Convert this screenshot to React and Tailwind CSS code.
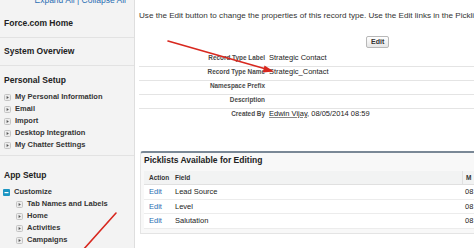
import React from 'react';

const Arrow = () => (
    <svg width="7" height="7" viewBox="0 0 7 7" className="shrink-0">
        <rect x="0.5" y="0.5" width="6" height="6" rx="1" fill="#ececec" stroke="#c4c4c4" />
        <path d="M2.6 1.9 L4.9 3.5 L2.6 5.1 Z" fill="#555" />
    </svg>
);

const Minus = () => (
    <svg width="7" height="7" viewBox="0 0 7 7" className="shrink-0">
        <rect x="0" y="0" width="7" height="7" rx="1" fill="#1b95c2" />
        <rect x="1.5" y="3" width="4" height="1.2" fill="#fff" />
    </svg>
);

const NavItem = ({ label, indent }) => (
    <div className={`flex items-center h-[12px] gap-[4px] ${indent ? 'pl-[16px]' : 'pl-[4px]'}`}>
        <Arrow />
        <span className="text-[7.5px] font-bold text-[#333]">{label}</span>
    </div>
);

const details = [
    ['Record Type Label', 'Strategic Contact'],
    ['Record Type Name', 'Strategic_Contact'],
    ['Namespace Prefix', ''],
    ['Description', ''],
];

const picklists = ['Lead Source', 'Level', 'Salutation'];

const App = () => {
    return (
        <div className="relative w-[474px] h-[248px] overflow-hidden flex bg-white" style={{ fontFamily: '"Liberation Sans", Arial, sans-serif' }}>
            {/* sidebar */}
            <div className="w-[135px] shrink-0 bg-[#f3f3f3] border-r border-[#dedede]">
                <div className="h-[10px] flex justify-end pr-[8px] overflow-hidden">
                    <span className="text-[8.5px] text-[#2a6fb3] leading-none mt-[-4px]">Expand All | Collapse All</span>
                </div>
                <div className="h-[28px] flex items-center pl-[4px] border-b border-[#e2e2e2]">
                    <span className="text-[8.5px] font-bold text-[#222]">Force.com Home</span>
                </div>
                <div className="h-[28px] flex items-center pl-[4px] border-b border-[#e2e2e2]">
                    <span className="text-[8.5px] font-bold text-[#222]">System Overview</span>
                </div>
                <div className="pt-[9px] pb-[4px] border-b border-[#e2e2e2]">
                    <div className="pl-[4px] text-[8.5px] leading-[10px] font-bold text-[#222] mb-[6px]">Personal Setup</div>
                    <NavItem label="My Personal Information" />
                    <NavItem label="Email" />
                    <NavItem label="Import" />
                    <NavItem label="Desktop Integration" />
                    <NavItem label="My Chatter Settings" />
                </div>
                <div className="pt-[14px]">
                    <div className="pl-[4px] text-[8.5px] leading-[10px] font-bold text-[#222] mb-[6px]">App Setup</div>
                    <div className="flex items-center h-[12px] gap-[4px] pl-[3px]">
                        <Minus />
                        <span className="text-[7.5px] font-bold text-[#333]">Customize</span>
                    </div>
                    <NavItem label="Tab Names and Labels" indent />
                    <NavItem label="Home" indent />
                    <NavItem label="Activities" indent />
                    <NavItem label="Campaigns" indent />
                </div>
            </div>

            {/* main */}
            <div className="flex-1 min-w-0 pl-[4px]">
                <div className="h-[11px]" />
                <p className="text-[8.1px] leading-[10px] text-[#333] whitespace-nowrap">
                    Use the Edit button to change the properties of this record type. Use the Edit links in the Picklists Available for Editing section
                </p>
                <div className="h-[6px]" />
                <div className="pl-[227px]">
                    <button className="h-[12px] px-[4px] text-[7px] font-bold text-[#333] border border-[#b8b8b8] rounded-[2px] bg-gradient-to-b from-white to-[#e6e6e6] leading-none">
                        Edit
                    </button>
                </div>
                <div className="mt-[2px]">
                    {details.map(([label, value]) => (
                        <div key={label} className="flex items-start h-[14px] pt-[1px] border-b border-[#e4e4e4]">
                            <div className="w-[126px] text-right text-[6.4px] leading-[8px] font-bold text-[#4a4a4a]">{label}</div>
                            <div className="pl-[4px] text-[7.5px] leading-[8px] text-[#222] whitespace-nowrap">{value}</div>
                        </div>
                    ))}
                    <div className="flex items-start h-[13px] pt-[1px]">
                        <div className="w-[126px] text-right text-[6.4px] leading-[8px] font-bold text-[#4a4a4a]">Created By</div>
                        <div className="pl-[4px] text-[7.5px] leading-[8px] text-[#222] whitespace-nowrap">
                            <span className="underline decoration-[#888]">Edwin Vijay</span>, 08/05/2014 08:59
                        </div>
                    </div>
                </div>

                {/* picklists */}
                <div className="mt-[29px] ml-[1px] border-t-2 border-[#7a8896] rounded-tl-[3px] bg-[#f8f8f8] border-l border-b border-l-[#e4e4e4] border-b-[#e4e4e4] pb-[4px]">
                    <div className="h-[14px] flex items-center pl-[3px]">
                        <span className="text-[8.5px] font-bold text-[#222]">Picklists Available for Editing</span>
                    </div>
                    <div className="ml-[3px] mt-[4px] bg-white">
                        <div className="flex items-center h-[14px] bg-[#f2f3f3] border-b border-[#e0e0e0] text-[6.5px] font-bold text-[#333]">
                            <div className="w-[31px] pl-[5px]">Action</div>
                            <div className="flex-1">Field</div>
                            <div className="w-[12px] h-full border-l border-[#e0e0e0] flex items-center pl-[3px]">M</div>
                        </div>
                        {picklists.map((f) => (
                            <div key={f} className="flex items-center h-[14.5px] border-b border-[#ececec] text-[7.5px]">
                                <div className="w-[31px] pl-[5px] text-[#2a6fb3]">Edit</div>
                                <div className="flex-1 text-[#222]">{f}</div>
                                <div className="w-[12px] pl-[3px] text-[#222]">08</div>
                            </div>
                        ))}
                    </div>
                </div>
            </div>

            {/* red annotation arrows */}
            <svg className="absolute inset-0 pointer-events-none" width="474" height="248" viewBox="0 0 474 248">
                <line x1="168" y1="41" x2="266" y2="69" stroke="#d8281f" strokeWidth="1.6" strokeLinecap="round" />
                <path d="M274 71.5 L264.5 65.5 L262.8 72.5 Z" fill="#d8281f" />
                <line x1="116" y1="213" x2="83" y2="250" stroke="#d8281f" strokeWidth="1.6" strokeLinecap="round" />
            </svg>
        </div>
    );
};

export default App;
